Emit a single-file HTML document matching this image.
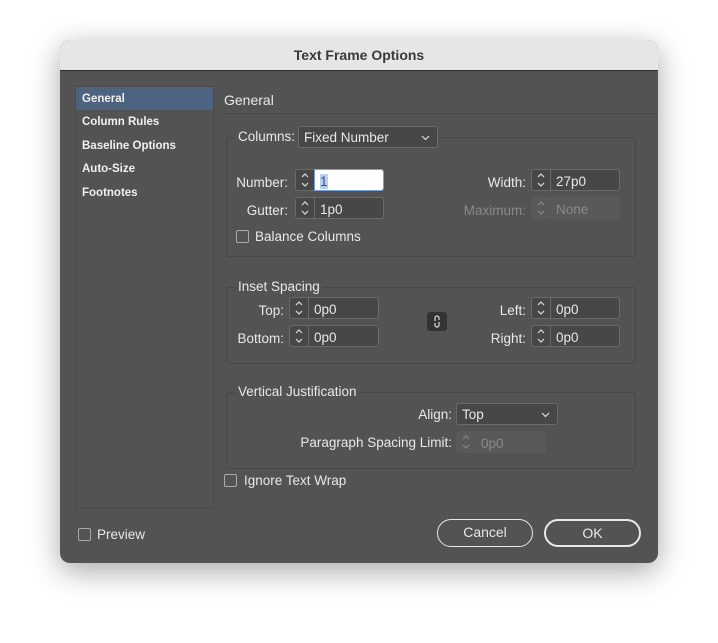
<!DOCTYPE html>
<html><head><meta charset="utf-8"><style>
*{box-sizing:border-box;margin:0;padding:0}
body{width:718px;height:643px;background:#fff;font-family:"Liberation Sans",sans-serif;font-size:13px;color:#e8e8e8;position:relative;overflow:hidden}
.dlg{position:absolute;left:60px;top:40px;width:598px;height:523px;background:#535353;border-radius:10px;box-shadow:0 8px 30px rgba(0,0,0,.35);overflow:hidden}
.tb{position:absolute;left:0;top:0;width:100%;height:31px;background:#e6e6e6;border-bottom:1px solid #2e2e2e;color:#3a3a3a;font-weight:bold;font-size:14px;text-align:center;line-height:31px}
.a{position:absolute;white-space:nowrap}
.side{position:absolute;left:15px;top:46px;width:139px;height:423px;border:1px solid #4a4a4a}
.sel{position:absolute;left:16px;top:47px;width:137px;height:23px;background:#4d6380}
.si{position:absolute;left:22px;font-size:11.5px;font-weight:bold;color:#f0f0f0}
.grp{position:absolute;border:1px solid #474747;border-radius:3px}
.leg{position:absolute;background:#535353;padding:0 3px;font-size:13.5px}
.spin{position:absolute;height:22px;border:1px solid #6a6a6a;border-radius:3px;background:#474747;display:flex}
.spin .ar{width:19px;border-right:1px solid #6a6a6a;display:flex;align-items:center;justify-content:center}
.spin .v{padding-left:5px;line-height:21px;font-size:13.5px;padding-top:1px}
.dis{background:#595959;border-color:#5a5a5a;color:#8a8a8a}
.dis .ar{border-color:#5a5a5a}
.lbl{position:absolute;text-align:right;font-size:13.5px}
.sel2{position:absolute;height:22px;border:1px solid #6a6a6a;border-radius:3px;background:#474747;font-size:13.5px;line-height:21px;padding-left:5px}
.sel2 svg{position:absolute;right:7px;top:8px}
.cb{position:absolute;width:13px;height:13px;border:1px solid #aaa;border-radius:2px}
.btn{position:absolute;height:28px;border:1.5px solid #e8e8e8;border-radius:14px;text-align:center;line-height:25px;font-size:14px}
</style></head><body>
<svg width="0" height="0" style="position:absolute"><defs>
<symbol id="ud" viewBox="0 0 10 18"><path d="M2 6 L5 3 L8 6 M2 12 L5 15 L8 12" fill="none" stroke="currentColor" stroke-width="1.2"/></symbol>
</defs></svg>
<div class="dlg">
<div class="tb">Text Frame Options</div>
<div class="side"></div>
<div class="sel"></div>
<div class="a si" style="top:53px">General</div>
<div class="a si" style="top:76px">Column Rules</div>
<div class="a si" style="top:100px">Baseline Options</div>
<div class="a si" style="top:123px">Auto-Size</div>
<div class="a si" style="top:147px">Footnotes</div>

<div class="a" style="left:164px;top:52px;font-size:14px">General</div>
<div class="a" style="left:164px;top:73px;width:434px;height:1px;background:#474747"></div>

<div class="grp" style="left:166px;top:97px;width:410px;height:120px"></div>
<div class="leg a" style="left:175px;top:89px">Columns:</div>
<div class="sel2" style="left:238px;top:86px;width:140px">Fixed Number<svg width="9" height="6"><path d="M1 1 L4.5 4.5 L8 1" fill="none" stroke="#ddd" stroke-width="1.2"/></svg></div>
<div class="lbl a" style="left:160px;top:135px;width:68px">Number:</div>
<div class="spin" style="left:235px;top:129px;width:89px"><div class="ar" style="color:#ddd"><svg width="10" height="18"><use href="#ud"/></svg></div><div class="v" style="background:#fff;color:#2a4f8f;flex:1;border-radius:0 2px 2px 0;outline:1px solid #7aa0d8"><span style="background:#b9cff0">1</span></div></div>
<div class="lbl a" style="left:160px;top:163px;width:68px">Gutter:</div>
<div class="spin" style="left:235px;top:157px;width:89px"><div class="ar" style="color:#ddd"><svg width="10" height="18"><use href="#ud"/></svg></div><div class="v">1p0</div></div>
<div class="cb" style="left:176px;top:190px"></div>
<div class="a" style="left:195px;top:189px;font-size:13.5px">Balance Columns</div>
<div class="lbl a" style="left:380px;top:135px;width:86px">Width:</div>
<div class="spin" style="left:471px;top:129px;width:89px"><div class="ar" style="color:#ddd"><svg width="10" height="18"><use href="#ud"/></svg></div><div class="v">27p0</div></div>
<div class="lbl a" style="left:380px;top:163px;width:86px;color:#8a8a8a">Maximum:</div>
<div class="spin dis" style="left:471px;top:157px;width:89px"><div class="ar" style="color:#888"><svg width="10" height="18"><use href="#ud"/></svg></div><div class="v">None</div></div>

<div class="grp" style="left:166px;top:247px;width:410px;height:77px"></div>
<div class="leg a" style="left:175px;top:239px">Inset Spacing</div>
<div class="lbl a" style="left:160px;top:263px;width:64px">Top:</div>
<div class="spin" style="left:229px;top:257px;width:90px"><div class="ar" style="color:#ddd"><svg width="10" height="18"><use href="#ud"/></svg></div><div class="v">0p0</div></div>
<div class="lbl a" style="left:160px;top:291px;width:64px">Bottom:</div>
<div class="spin" style="left:229px;top:285px;width:90px"><div class="ar" style="color:#ddd"><svg width="10" height="18"><use href="#ud"/></svg></div><div class="v">0p0</div></div>
<div class="a" style="left:367px;top:272px;width:20px;height:19px;background:#333;border-radius:3px"><svg width="20" height="19"><path d="M8 9 V6 a2 2 0 0 1 4 0 V8 M12 10 V13 a2 2 0 0 1 -4 0 V11" fill="none" stroke="#ddd" stroke-width="1.2"/></svg></div>
<div class="lbl a" style="left:400px;top:263px;width:66px">Left:</div>
<div class="spin" style="left:471px;top:257px;width:89px"><div class="ar" style="color:#ddd"><svg width="10" height="18"><use href="#ud"/></svg></div><div class="v">0p0</div></div>
<div class="lbl a" style="left:400px;top:291px;width:66px">Right:</div>
<div class="spin" style="left:471px;top:285px;width:89px"><div class="ar" style="color:#ddd"><svg width="10" height="18"><use href="#ud"/></svg></div><div class="v">0p0</div></div>

<div class="grp" style="left:166px;top:352px;width:410px;height:77px"></div>
<div class="leg a" style="left:175px;top:344px">Vertical Justification</div>
<div class="lbl a" style="left:280px;top:367px;width:112px">Align:</div>
<div class="sel2" style="left:396px;top:363px;width:102px">Top<svg width="9" height="6"><path d="M1 1 L4.5 4.5 L8 1" fill="none" stroke="#ddd" stroke-width="1.2"/></svg></div>
<div class="lbl a" style="left:200px;top:395px;width:192px">Paragraph Spacing Limit:</div>
<div class="spin dis" style="left:396px;top:391px;width:90px"><div class="ar" style="color:#888"><svg width="10" height="18"><use href="#ud"/></svg></div><div class="v">0p0</div></div>

<div class="cb" style="left:164px;top:434px"></div>
<div class="a" style="left:184px;top:433px;font-size:13.5px">Ignore Text Wrap</div>

<div class="cb" style="left:18px;top:488px"></div>
<div class="a" style="left:37px;top:487px;font-size:13.5px">Preview</div>
<div class="btn" style="left:377px;top:479px;width:96px">Cancel</div>
<div class="btn" style="left:484px;top:479px;width:97px;border-width:2px">OK</div>
</div>
</body></html>
